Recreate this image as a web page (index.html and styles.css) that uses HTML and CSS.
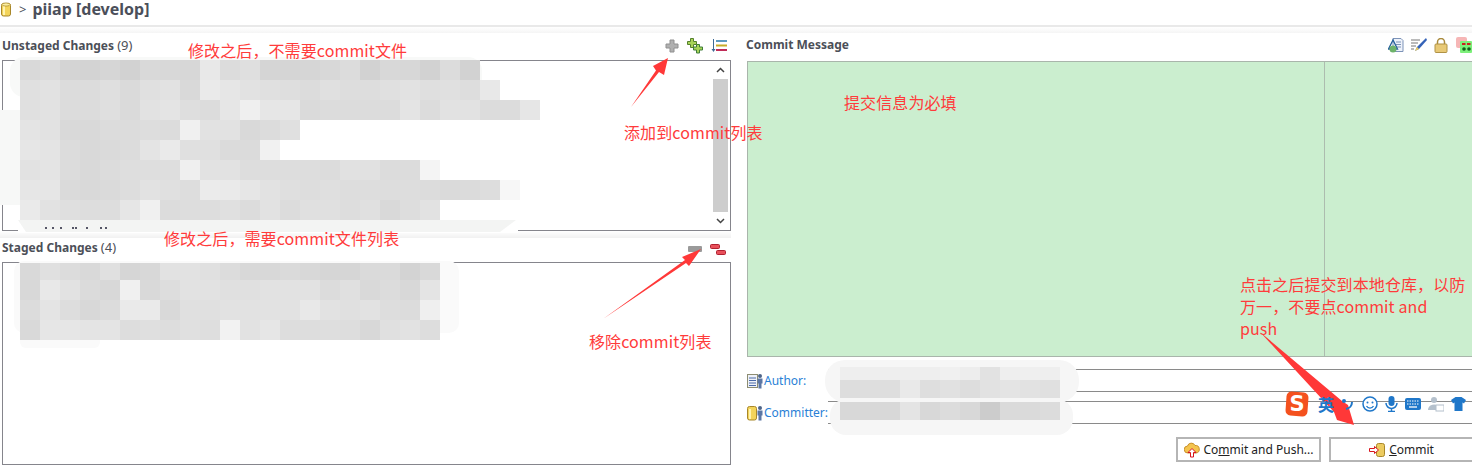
FILE: index.html
```html
<!DOCTYPE html>
<html lang="zh-CN">
<head>
<meta charset="utf-8">
<title>piiap [develop]</title>
<link rel="stylesheet" href="styles.css">
</head>
<body>
<div class="page">
  <header class="titlebar">
    <svg class="repo-icon" width="10" height="15" viewBox="0 0 10 15"><rect x="0.5" y="1.5" width="9" height="12.5" rx="2" fill="#f3d45a" stroke="#a8872a"/><rect x="2" y="3" width="2" height="10" fill="#fff3b0"/><ellipse cx="5" cy="2.5" rx="4" ry="1.6" fill="#fbeea0" stroke="#a8872a" stroke-width=".7"/></svg>
    <span class="crumb">&gt;</span>
    <h1 class="repo-name">piiap [develop]</h1>
  </header>
  <div class="strip"></div>
  <main class="panes">
    <section class="left">
      <div class="bar bar-first">
        <h2 class="bar-title">Unstaged Changes <span class="count">(9)</span></h2>
        <div class="tools tools-unstaged">
          <svg width="14" height="14" viewBox="0 0 14 14"><path d="M5 1h4v4h4v4H9v4H5V9H1V5h4z" fill="#b0b0b0" stroke="#909090"/></svg>
          <svg width="16" height="16" viewBox="0 0 16 16"><path d="M3.500.5h3v3h3v3h-3v3h-3v-3h-3v-3h3z" fill="#a8d458" stroke="#55802e"/><path d="M9.500 6.500h3v2.500h3v3h-3v3h-3v-3h-3V9h3z" fill="#a8d458" stroke="#3f7d3a"/></svg>
          <svg width="16" height="14" viewBox="0 0 16 14"><path d="M2.500 0v11" stroke="#3d6a95" fill="none"/><path d="M0.500 10h4l-2 3z" fill="#3d6a95"/><rect x="5" y="1" width="11" height="2" fill="#5e9ac0"/><rect x="5" y="5.500" width="11" height="2" fill="#c8ac28"/><rect x="5" y="10" width="11" height="2" fill="#c02c58"/></svg>
        </div>
      </div>
      <div class="list list-unstaged">
        <div class="scrollbar">
          <svg class="scroll-up" width="9" height="6" viewBox="0 0 9 6"><path d="M1 5l3.500-3.500L8 5" fill="none" stroke="#444" stroke-width="1.500"/></svg>
          <span class="scroll-thumb"></span>
          <svg class="scroll-down" width="9" height="6" viewBox="0 0 9 6"><path d="M1 1l3.500 3.500L8 1" fill="none" stroke="#444" stroke-width="1.500"/></svg>
        </div>
      </div>
      <div class="strip strip-mid"></div>
      <div class="bar bar-second">
        <h2 class="bar-title">Staged Changes <span class="count">(4)</span></h2>
        <div class="tools tools-staged">
          <svg width="14" height="6" viewBox="0 0 14 6"><rect width="14" height="6" rx="1" fill="#9a9a9a"/></svg>
          <svg width="16" height="11" viewBox="0 0 16 11"><rect x="0.500" y="0.500" width="9" height="4" rx="1" fill="#e8505a" stroke="#b02030"/><rect x="6.500" y="6.500" width="9" height="4" rx="1" fill="#e8505a" stroke="#b02030"/></svg>
        </div>
      </div>
      <div class="list list-staged"></div>
    </section>
    <section class="right">
      <div class="bar bar-first">
        <h2 class="bar-title">Commit Message</h2>
        <div class="tools tools-message">
          <svg width="16" height="15" viewBox="0 0 16 15"><path d="M5 .5h8l2 2v11H5z" fill="#eef2fa" stroke="#7d93b8"/><path d="M8 4h5M8 6.500h5M8 9h5" stroke="#7d93b8"/><path d="M5 2L.5 11h9z" fill="none" stroke="#245f9a" stroke-width="1.300"/><circle cx="5" cy="11" r="3.500" fill="#6db36a"/></svg>
          <svg width="16" height="15" viewBox="0 0 16 15"><path d="M0 2h9M0 5h7M0 8h5M0 11h3" stroke="#777"/><path d="M15 0l1 2-8 9-4 2 2-4z" fill="#3563b8"/><path d="M4 13l2-4 2 2z" fill="#f2cd55"/></svg>
          <svg width="14" height="15" viewBox="0 0 14 15"><path d="M3.500 6V4a3.500 3.500 0 0 1 7 0v2" fill="none" stroke="#a98a3c" stroke-width="1.500"/><rect x="1" y="6" width="12" height="8.500" rx="1" fill="#e8c976" stroke="#b09245"/></svg>
          <svg class="gerrit-icon" width="16" height="16" viewBox="0 0 16 16"><rect x="0" y="0" width="11" height="11" rx="2" fill="#f6b6b6"/><rect x="4" y="4" width="12" height="12" rx="1" fill="#7df07a"/><rect x="6" y="6" width="3.500" height="2" fill="#cc1f1f"/><rect x="11" y="6" width="3.500" height="2" fill="#cc1f1f"/><circle cx="8" cy="12" r="1.800" fill="#0f5f1a"/><circle cx="13" cy="12" r="1.800" fill="#0f5f1a"/></svg>
        </div>
      </div>
      <div class="editor-row">
        <svg class="bulb" width="5" height="8" viewBox="0 0 5 8"><circle cx="2.500" cy="2.500" r="2" fill="#fff" stroke="#d98a30"/><rect x="1.500" y="5" width="2" height="3" fill="#b9a070"/></svg>
        <div class="editor"><span class="margin-line"></span></div>
      </div>
      <div class="person-row person-author">
        <svg width="16" height="16" viewBox="0 0 16 16"><rect x=".5" y="1.500" width="10" height="13" fill="#eef1f8" stroke="#8d8d72"/><path d="M2 5h7M2 7.500h7M2 10h7M2 12.500h7" stroke="#4a6aa8"/><circle cx="13" cy="3" r="2" fill="#4d6488"/><path d="M10.500 5.500h5v5h-1v5h-3v-5h-1z" fill="#5b76a4"/></svg>
        <label class="person-label">Author:</label>
        <span class="person-field"></span>
      </div>
      <div class="person-row person-committer">
        <svg width="16" height="16" viewBox="0 0 16 16"><rect x=".5" y="1.500" width="9" height="13.500" rx="2" fill="#f3d45a" stroke="#a8872a"/><rect x="2" y="4" width="2" height="10" fill="#fff3b0"/><circle cx="13" cy="3" r="2" fill="#4d6488"/><path d="M10.500 5.500h5v5h-1v5h-3v-5h-1z" fill="#5b76a4"/></svg>
        <label class="person-label">Committer:</label>
        <span class="person-field"></span>
      </div>
      <div class="actions">
        <button class="btn btn-push">
          <svg width="16" height="16" viewBox="0 0 16 16"><path d="M4 11a3.500 3.500 0 0 1-.5-7A4 4 0 0 1 11 3.500a3.500 3.500 0 0 1 1 7.500z" fill="#f4c44e" stroke="#c8902a"/><path d="M8 6.500l4 4H9.500V15h-3v-4.500H4z" fill="#fff" stroke="#d8141c"/></svg>
          <span>Co<u>m</u>mit and Push...</span>
        </button>
        <button class="btn btn-commit">
          <svg width="16" height="14" viewBox="0 0 16 14"><rect x="7.500" y=".5" width="8" height="13" rx="2" fill="#eccb60" stroke="#a8872a"/><path d="M.5 5.500h5v-2l4 3.500-4 3.500v-2h-5z" fill="#fff" stroke="#d8141c"/></svg>
          <span><u>C</u>ommit</span>
        </button>
      </div>
    </section>
  </main>
</div>

<svg class="canvas" id="mosaic" width="1472" height="465" viewBox="0 0 1472 465" aria-hidden="true"></svg>

<div class="ime" aria-hidden="true">
  <svg class="ime-logo" width="24" height="28" viewBox="0 0 24 28"><rect x="1" y="2" width="22" height="24" rx="5" fill="#f4511e" transform="rotate(4 12 14)"/><text x="12" y="21" text-anchor="middle" class="ime-s">S</text></svg>
  <span class="ime-en">英</span>
  <svg width="16" height="18" viewBox="0 0 16 18"><circle cx="5" cy="6" r="2" fill="#1f77c9"/><path d="M13 7a7 7 0 0 1-6 7" fill="none" stroke="#1f77c9" stroke-width="2"/></svg>
  <svg width="16" height="16" viewBox="0 0 16 16"><circle cx="8" cy="8" r="7" fill="#fff" stroke="#1f77c9" stroke-width="1.500"/><circle cx="5.500" cy="6.500" r="1" fill="#1f77c9"/><circle cx="10.500" cy="6.500" r="1" fill="#1f77c9"/><path d="M4.500 10a4 4 0 0 0 7 0" fill="none" stroke="#1f77c9" stroke-width="1.300"/></svg>
  <svg width="13" height="16" viewBox="0 0 13 16"><rect x="3.500" y="0" width="6" height="10" rx="3" fill="#1f77c9"/><path d="M1 7a5.500 5.500 0 0 0 11 0M6.500 12.500V15M3 15.500h7" fill="none" stroke="#1f77c9" stroke-width="1.500"/></svg>
  <svg width="16" height="12" viewBox="0 0 16 12"><rect width="16" height="12" rx="2" fill="#1f77c9"/><path d="M2 3h12M2 6h12" stroke="#fff" stroke-dasharray="1.500 1"/><path d="M4 9h8" stroke="#fff" stroke-width="1.300"/></svg>
  <svg width="16" height="16" viewBox="0 0 16 16"><circle cx="6" cy="4" r="3" fill="#b4c0cc"/><path d="M0 14a6 5.500 0 0 1 11-3v3z" fill="#b4c0cc"/><rect x="8" y="9" width="8" height="6" fill="#fff" stroke="#b4c0cc"/></svg>
  <svg width="15" height="14" viewBox="0 0 15 14"><path d="M4.500 0h6L15 3l-2 3.500-1.500-1V14h-8V5.500L2 6.500 0 3z" fill="#1f77c9"/></svg>
</div>

<div class="note note-a">修改之后，不需要commit文件</div>
<div class="note note-b">添加到commit列表</div>
<div class="note note-c">修改之后，需要commit文件列表</div>
<div class="note note-d">移除commit列表</div>
<div class="note note-e">提交信息为必填</div>
<div class="note note-f">点击之后提交到本地仓库，以防万一，不要点commit and push</div>

<script src="mosaic.js"></script>
</body>
</html>
```

FILE: styles.css
```css
* { box-sizing: border-box; }
html, body { margin: 0; padding: 0; background: #fff; }
body { width: 1472px; height: 465px; overflow: hidden; position: relative; font-family: "Noto Sans", sans-serif; }

.page { display: flex; flex-direction: column; height: 465px; }

.titlebar { height: 27px; flex: none; display: flex; align-items: center; padding: 0 0 7px 1px; border-bottom: 2px solid #e9e9e9; }
.repo-icon { flex: none; }
.crumb { margin-left: 8px; font-size: 13px; color: #4b4f5a; }
.repo-name { margin: 0 0 0 6px; font-size: 16px; font-weight: bold; color: #4b4f5a; font-family: "Noto Sans", sans-serif; }

.strip { height: 6px; flex: none; background: linear-gradient(#fff, #f5f5f5); }
.strip-mid { height: 7px; margin-left: -2px; background: linear-gradient(#fff, #f1f1f1); }

.panes { flex: 1; display: flex; min-height: 0; }
.left { width: 729px; flex: none; margin-left: 2px; display: flex; flex-direction: column; }
.right { flex: 1; min-width: 0; margin-left: 15px; display: flex; flex-direction: column; overflow: hidden; }

.bar { display: flex; justify-content: space-between; align-items: center; flex: none; }
.bar-first { height: 27px; padding-bottom: 3px; }
.bar-second { height: 24px; padding-bottom: 5px; }
.bar-title { margin: 0; font-size: 12px; line-height: 14px; font-weight: bold; color: #4c4f58; }
.count { font-weight: normal; font-size: 13px; }

.tools { display: flex; align-items: center; }
.tools-unstaged { gap: 8px; padding-right: 4px; padding-top: 2px; }
.tools-staged { gap: 8px; padding-right: 5px; padding-top: 3px; }
.tools-message { gap: 7px; }
.gerrit-icon { margin-left: 1px; }

.list { border: 1px solid #85858c; background: #fff; position: relative; }
.list-unstaged { height: 171px; flex: none; display: flex; justify-content: flex-end; padding-right: 2px; }
.list-staged { flex: 1; }

.scrollbar { width: 15px; display: flex; flex-direction: column; align-items: center; }
.scroll-up { margin: 6px 0; flex: none; }
.scroll-thumb { width: 100%; height: 133px; background: #cdcdcd; flex: none; }
.scroll-down { margin-top: 6px; flex: none; }

.editor-row { display: flex; height: 296px; flex: none; margin-top: 1px; margin-left: -5px; }
.bulb { flex: none; margin: 1px 1px 0 0; }
.editor { flex: 1; background: #cbeecf; border: 1px solid #a9b5ab; border-right: 0; position: relative; display: flex; }
.margin-line { width: 1px; background: #adbcaf; margin-left: 576px; }

.person-row { display: flex; align-items: center; height: 23px; flex: none; margin-left: 1px; }
.person-author { margin-top: 12px; }
.person-committer { margin-top: 9px; }
.person-label { font-size: 12px; color: #2a7fd6; margin-left: 1px; width: 64px; flex: none; }
.person-field { flex: 1; height: 23px; border-top: 1px solid #8a8a8a; border-bottom: 1px solid #8a8a8a; }

.actions { display: flex; justify-content: flex-end; gap: 8px; margin-top: 13px; margin-right: -2px; }
.btn { height: 25px; background: #fff; border: 2px solid #b5b5b5; padding: 0; display: flex; align-items: center; justify-content: center; gap: 4px; font-family: "Noto Sans", sans-serif; font-size: 12px; color: #222; }
.btn-push { width: 145px; }
.btn-commit { width: 145px; }

.canvas { position: absolute; left: 0; top: 0; pointer-events: none; }

.ime { position: absolute; left: 1285px; top: 390px; display: flex; align-items: center; gap: 7px; height: 28px; }
.ime-logo { margin-right: 2px; }
.ime-s { font-family: "DejaVu Sans", sans-serif; font-weight: bold; font-size: 21px; fill: #fff; }
.ime-en { font-family: "Noto Sans CJK SC", sans-serif; font-weight: bold; font-size: 16px; color: #1f77c9; margin-right: -2px; }

.note { position: absolute; font-family: "Noto Sans CJK SC", sans-serif; font-size: 16px; line-height: 22px; letter-spacing: .1px; color: #ff3b3b; white-space: nowrap; }
.note-a { left: 188px; top: 39px; }
.note-b { left: 624px; top: 121px; }
.note-c { left: 164px; top: 227px; }
.note-d { left: 589px; top: 330px; }
.note-e { left: 844px; top: 91px; }
.note-f { left: 1240px; top: 273px; width: 228px; white-space: normal; }
```

FILE: mosaic.js
```js
// Privacy blur over the file lists and the author fields: rows of grey cells.
var NS = "http://www.w3.org/2000/svg";
var svg = document.getElementById("mosaic");

function shape(name, attrs) {
  var el = document.createElementNS(NS, name);
  for (var k in attrs) el.setAttribute(k, attrs[k]);
  svg.appendChild(el);
}
function row(x, y, h, levels) {
  levels.split(" ").forEach(function (v, i) {
    shape("rect", { x: x + i * 20, y: y, width: 20, height: h, fill: "#" + v + v + v });
  });
}
function poly(points, fill) { shape("polygon", { points: points, fill: fill }); }

// halos of the brush around the blur
shape("rect", { x: 10, y: 57, width: 472, height: 40, rx: 14, fill: "#f8f9f8" });
shape("rect", { x: 0, y: 110, width: 40, height: 95, fill: "#f7f8f7" });
shape("rect", { x: 18, y: 215, width: 500, height: 18, fill: "#fff" });
poly("18,220 516,220 500,232 26,232", "#f3f4f3");
shape("rect", { x: 14, y: 261, width: 445, height: 72, rx: 10, fill: "#fafafa" });
shape("rect", { x: 20, y: 335, width: 80, height: 13, rx: 6, fill: "#fafafa" });
shape("rect", { x: 825, y: 360, width: 254, height: 42, rx: 20, fill: "#f6f6f6" });
shape("rect", { x: 830, y: 399, width: 243, height: 36, rx: 16, fill: "#f6f6f6" });

// first list
row(20, 60, 20, "d9 dc d4 d3 d6 d2 d9 d8 d7 e8 dc df d5 d5 d6 d8 dc d2 d8 d7 d2 dc d2");
row(20, 80, 20, "e0 e2 dc dc df da e0 e2 d9 ea e6 e2 e0 de dc e0 dd dd e0 e2 df e0 dd e8");
row(20, 100, 20, "e0 e2 dc dc df da e2 e4 de dc e6 ef e6 e6 da dc dc dc dc e4 dc e2 e2 dc dc e6");
row(20, 120, 20, "e4 e2 d9 d9 dc dc dd dc f0 e2 e2 d9 dc e0");
row(20, 140, 20, "e6 e4 dc d9 da dc e4 ea e0 e0 db db f1");
row(20, 160, 20, "e2 e4 dc d9 dc de de de ef e2 e2 dd dd dd dd dc e1 e1 dc dc f4");
row(20, 180, 20, "e6 e6 da d9 da dd e2 e0 dd eb ea e6 e2 df dd df dd dd dd dd dc da db dd f7");
row(20, 200, 20, "ea e2 df dd dd e6 f0 dc dd dd e0 dc e2 dc e0 e0 dd e0 d9 dd e2");
["45", "52", "60", "72", "75", "86", "100", "105"].forEach(function (x) {
  shape("rect", { x: x, y: 227, width: 2, height: 2, fill: "#556" });
});

// second list
row(20, 263, 17, "d9 e0 dc d9 e0 d6 d8 e2 e2 e0 dc d8 d8 da d8 d6 d6 da da d3 d9");
row(20, 280, 20, "d8 e8 e2 db d8 f0 d9 dd e2 e2 e0 e0 e2 e2 e2 dc e0 d9 dc d8 e4");
row(20, 300, 20, "dc e4 dd d8 dc ea ea d9 e0 e0 e2 e2 e2 e2 e8 e2 e0 e2 dd dc ef");
row(20, 320, 20, "d9 e6 e6 e4 e4 dd df dd e0 de f2 e2 e6 dd dd de dd d8 e0 e2 dd");

// author fields
row(840, 367, 13, "ee ee ee ee ee f0 ed e2 ee ef ee");
row(840, 380, 18, "dd de de e9 de e1 dd e2 e4 e2 e0");
row(840, 402, 18, "d8 d8 d8 e4 d8 dc d8 cc da da dc");

// arrows
var red = "#ff3838";
poly("631,107 656,70.500 653,66 668,58 664,75 659,72", red);
poly("603,319 685,260 682,257 701,249 689,266 686,263", red);
poly("1260,332 1342,401 1348,405 1354,425 1337,420 1334,412", red);
```
